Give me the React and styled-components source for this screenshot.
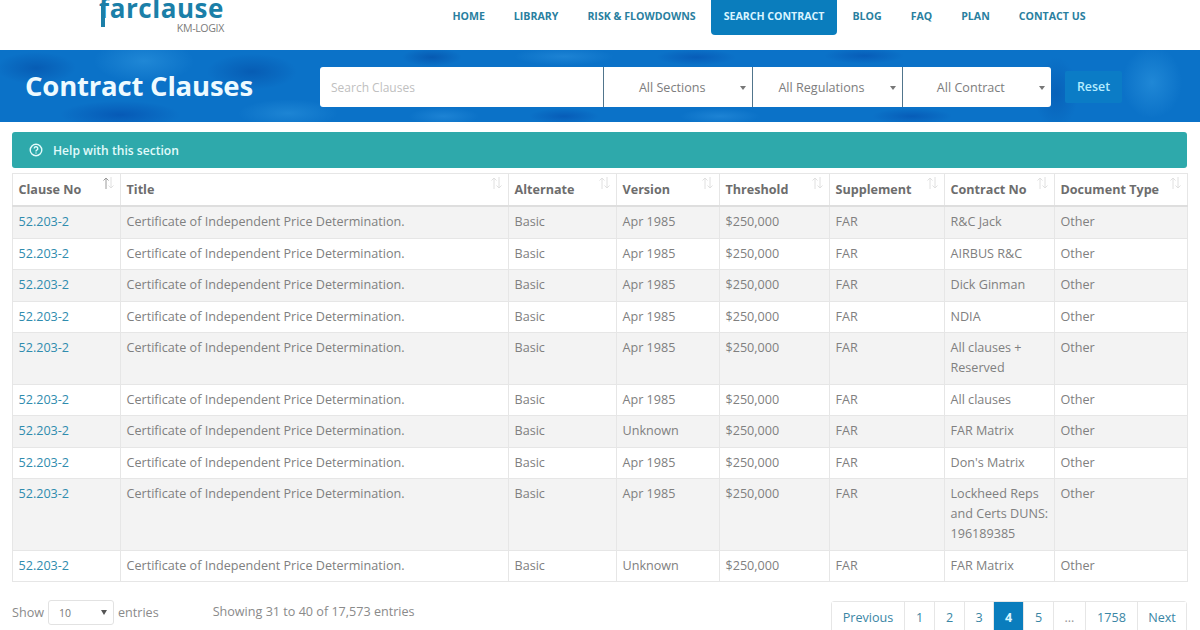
import React from 'react';
import styled, { createGlobalStyle } from 'styled-components';

const GlobalStyle = createGlobalStyle`
  html, body {
    margin: 0;
    padding: 0;
    background: #fff;
    overflow: hidden;
    font-family: "Open Sans", "Liberation Sans", sans-serif;
  }
`;

const Page = styled.div`
  width: 1200px;
  height: 630px;
  overflow: hidden;
`;

const Header = styled.header`
  height: 50px;
  display: flex;
  padding: 0 100px;
  box-sizing: border-box;
`;

const Logo = styled.div`
  display: flex;
  flex-direction: column;
  align-items: flex-end;
  width: 124px;
`;

const LogoName = styled.div`
  font-size: 26px;
  line-height: 26px;
  margin-top: -5px;
  font-weight: 700;
  color: #1b7fa8;
  letter-spacing: 0.55px;
  span {
    position: relative;
  }
  span::after {
    content: '';
    position: absolute;
    left: 2px;
    top: 14px;
    width: 4px;
    height: 23px;
    background: #1b7fa8;
  }
`;

const LogoSub = styled.div`
  font-size: 10.6px;
  line-height: 12px;
  margin-top: 1px;
  letter-spacing: -0.35px;
  color: #7b7b7b;
`;

const Nav = styled.nav`
  margin-left: auto;
  margin-right: 1px;
  display: flex;
  align-items: flex-start;
  gap: 2px;
`;

const NavLink = styled.a`
  font-size: 10.6px;
  font-weight: 700;
  line-height: 32px;
  height: 35px;
  padding: 0 ${props => (props.$active ? '12.5px' : '13.5px')};
  text-transform: uppercase;
  white-space: nowrap;
  color: ${props => (props.$active ? '#d9f4ff' : '#2a7f9f')};
  background: ${props => (props.$active ? '#0a7dbd' : 'transparent')};
  border-radius: 0 0 4px 4px;
`;

const Banner = styled.section`
  height: 72px;
  display: flex;
  align-items: center;
  padding: 0 25px;
  box-sizing: border-box;
  background:
    radial-gradient(ellipse 40px 16px at 3% 25%, rgba(0, 60, 150, 0.4), transparent),
    radial-gradient(ellipse 50px 22px at 12% 15%, rgba(70, 175, 240, 0.35), transparent),
    radial-gradient(ellipse 45px 18px at 21% 30%, rgba(0, 60, 150, 0.4), transparent),
    radial-gradient(ellipse 60px 14px at 10% 90%, rgba(0, 60, 160, 0.45), transparent),
    radial-gradient(ellipse 50px 14px at 24% 88%, rgba(70, 175, 240, 0.3), transparent),
    radial-gradient(ellipse 30px 9px at 36% 10%, rgba(0, 60, 150, 0.45), transparent),
    radial-gradient(ellipse 50px 9px at 47% 9%, rgba(70, 170, 240, 0.3), transparent),
    radial-gradient(ellipse 40px 8px at 58% 10%, rgba(0, 60, 160, 0.4), transparent),
    radial-gradient(ellipse 35px 9px at 37% 92%, rgba(70, 170, 240, 0.3), transparent),
    radial-gradient(ellipse 35px 8px at 47% 92%, rgba(0, 60, 160, 0.4), transparent),
    radial-gradient(ellipse 40px 8px at 60% 92%, rgba(70, 170, 240, 0.3), transparent),
    radial-gradient(ellipse 40px 8px at 72% 8%, rgba(0, 60, 160, 0.4), transparent),
    radial-gradient(ellipse 40px 8px at 76% 92%, rgba(0, 60, 160, 0.4), transparent),
    radial-gradient(ellipse 30px 36px at 96% 45%, rgba(70, 175, 240, 0.35), transparent),
    radial-gradient(ellipse 22px 36px at 88% 60%, rgba(0, 60, 150, 0.3), transparent),
    #0b72c8;
`;

const Title = styled.h1`
  margin: 0 0 1px;
  width: 295px;
  font-size: 27.5px;
  font-weight: 700;
  letter-spacing: -0.2px;
  white-space: nowrap;
  color: #eefaff;
`;

const Filters = styled.div`
  display: flex;
  width: 731px;
  height: 40px;
  margin-top: 1px;
  background: #fff;
  border-radius: 3px;
  overflow: hidden;
`;

const SearchInput = styled.div`
  width: 283px;
  padding-left: 11px;
  box-sizing: border-box;
  font-size: 12px;
  line-height: 41px;
  color: #c0c0c0;
`;

const FilterSelect = styled.div`
  flex: 1;
  position: relative;
  border-left: 1px solid #51758c;
  font-size: 12.6px;
  line-height: 41px;
  text-align: center;
  padding-right: 12px;
  color: #7d7d7d;
  &::after {
    content: '';
    position: absolute;
    right: 6px;
    top: 19px;
    border: 3.5px solid transparent;
    border-top: 4px solid #777;
    border-bottom: 0;
  }
`;

const ResetButton = styled.button`
  margin: 1px 0 0 14px;
  width: 57px;
  height: 32px;
  border: 0;
  padding: 0;
  background: #0b7cc6;
  color: #b5ecff;
  font: 600 12.4px "Open Sans", sans-serif;
  border-radius: 2px;
`;

const Content = styled.main`
  padding: 10px 13px 0 12px;
`;

const HelpBar = styled.div`
  height: 36px;
  display: flex;
  align-items: center;
  gap: 10px;
  padding-left: 17px;
  background: #2ea9ab;
  border-radius: 3px;
  color: #e2fbfb;
  font-size: 12.1px;
  font-weight: 600;
`;

const HelpIcon = styled.svg`
  width: 14px;
  height: 14px;
  fill: none;
  stroke: currentColor;
`;

const Table = styled.table`
  margin-top: 5px;
  width: 1175px;
  table-layout: fixed;
  border-collapse: collapse;
  font-size: 12.6px;
  line-height: 20px;
  color: #808080;
`;

const Th = styled.th`
  border: 1px solid #e6e6e6;
  border-bottom: 2px solid #dedede;
  padding: 0 5.5px;
  height: 31px;
  text-align: left;
  font-size: 12.6px;
  font-weight: 700;
  color: #6d6d6d;
  white-space: nowrap;
`;

const ThInner = styled.div`
  display: flex;
  justify-content: space-between;
`;

const SortIcon = styled.svg`
  width: 13px;
  height: 14px;
  margin-top: -4px;
  fill: none;
  stroke: #e0e0e0;
  flex-shrink: 0;
  .up {
    stroke: ${props => (props.$sorted ? '#9a9a9a' : '#e0e0e0')};
  }
`;

const Row = styled.tr`
  background: ${props => (props.$odd ? '#f3f3f3' : '#fff')};
`;

const Td = styled.td`
  border: 1px solid #e6e6e6;
  padding: 5.25px 5.5px;
  vertical-align: top;
`;

const ClauseLink = styled.a`
  color: #2f8cae;
`;

const Footer = styled.div`
  margin-top: 17px;
  display: flex;
  align-items: flex-start;
  font-size: 12.6px;
  color: #8a8a8a;
`;

const LengthLabel = styled.div`
  display: flex;
  align-items: center;
  gap: 4px;
  height: 26px;
  margin-right: 1px;
`;

const LengthSelect = styled.div`
  width: 66px;
  height: 25px;
  box-sizing: border-box;
  position: relative;
  border: 1px solid #e2e2e2;
  border-radius: 3px;
  padding-left: 10px;
  font-size: 10.5px;
  line-height: 25px;
  color: #777;
  &::after {
    content: '';
    position: absolute;
    right: 6px;
    top: 9px;
    border: 3px solid transparent;
    border-top: 5px solid #555;
    border-bottom: 0;
  }
`;

const Info = styled.div`
  margin: 2px 0 0 53px;
  line-height: 22px;
`;

const Pagination = styled.div`
  margin: 2px 0 0 auto;
  display: flex;
  height: 40px;
  border: 1px solid #e6e6e6;
  border-radius: 3px;
  box-sizing: border-box;
`;

const PageItem = styled.a`
  width: ${props => props.$w}px;
  box-sizing: border-box;
  text-align: center;
  padding-top: 6px;
  line-height: 20px;
  font-size: 12.6px;
  border-left: ${props => (props.$first ? '0' : '1px solid #e6e6e6')};
  color: ${props => (props.$active ? '#d9f6ff' : props.$muted ? '#999' : '#3a86a5')};
  background: ${props => (props.$active ? '#0a7dbd' : '#fff')};
  font-weight: ${props => (props.$active ? 700 : 400)};
`;

const navItems = ['Home', 'Library', 'Risk & Flowdowns', 'Search Contract', 'Blog', 'FAQ', 'Plan', 'Contact Us'];
const filters = ['All Sections', 'All Regulations', 'All Contract'];

const columns = [
  { label: 'Clause No', width: 108, sorted: true },
  { label: 'Title', width: 388 },
  { label: 'Alternate', width: 108 },
  { label: 'Version', width: 103 },
  { label: 'Threshold', width: 110 },
  { label: 'Supplement', width: 115 },
  { label: 'Contract No', width: 110 },
  { label: 'Document Type', width: 133 },
];

const rows = [
  ['Apr 1985', ['R&C Jack']],
  ['Apr 1985', ['AIRBUS R&C']],
  ['Apr 1985', ['Dick Ginman']],
  ['Apr 1985', ['NDIA']],
  ['Apr 1985', ['All clauses +', 'Reserved']],
  ['Apr 1985', ['All clauses']],
  ['Unknown', ['FAR Matrix']],
  ['Apr 1985', ["Don's Matrix"]],
  ['Apr 1985', ['Lockheed Reps', 'and Certs DUNS:', '196189385']],
  ['Unknown', ['FAR Matrix']],
];

const pages = [
  { label: 'Previous', w: 72 },
  { label: '1', w: 30 },
  { label: '2', w: 30 },
  { label: '3', w: 29 },
  { label: '4', w: 30, active: true },
  { label: '5', w: 30 },
  { label: '…', w: 32, muted: true },
  { label: '1758', w: 52 },
  { label: 'Next', w: 49 },
];

function Sort({ sorted }) {
  return (
    <SortIcon $sorted={sorted} viewBox="0 0 13 14">
      <path className="up" d="M4 13V2M1.5 4.5 4 2l2.5 2.5" />
      <path d="M9 1v11M6.5 9.5 9 12l2.5-2.5" />
    </SortIcon>
  );
}

export default function App() {
  return (
    <Page>
      <GlobalStyle />
      <Header>
        <Logo>
          <LogoName><span>f</span>arclause</LogoName>
          <LogoSub>KM-LOGIX</LogoSub>
        </Logo>
        <Nav>
          {navItems.map(item => (
            <NavLink key={item} $active={item === 'Search Contract'}>{item}</NavLink>
          ))}
        </Nav>
      </Header>

      <Banner>
        <Title>Contract Clauses</Title>
        <Filters>
          <SearchInput>Search Clauses</SearchInput>
          {filters.map(f => <FilterSelect key={f}>{f}</FilterSelect>)}
        </Filters>
        <ResetButton>Reset</ResetButton>
      </Banner>

      <Content>
        <HelpBar>
          <HelpIcon viewBox="0 0 14 14" strokeWidth="1.4">
            <circle cx="7" cy="7" r="5.8" />
            <path d="M5.2 5.6a1.8 1.8 0 1 1 2.6 1.6c-.6.3-.8.6-.8 1.2M7 9.6v1" />
          </HelpIcon>
          Help with this section
        </HelpBar>

        <Table>
          <colgroup>
            {columns.map(c => <col key={c.label} style={{ width: c.width }} />)}
          </colgroup>
          <thead>
            <tr>
              {columns.map(c => (
                <Th key={c.label}>
                  <ThInner>
                    {c.label}
                    <Sort sorted={c.sorted} />
                  </ThInner>
                </Th>
              ))}
            </tr>
          </thead>
          <tbody>
            {rows.map(([version, contract], i) => (
              <Row key={i} $odd={i % 2 === 0}>
                <Td><ClauseLink>52.203-2</ClauseLink></Td>
                <Td>Certificate of Independent Price Determination.</Td>
                <Td>Basic</Td>
                <Td>{version}</Td>
                <Td>$250,000</Td>
                <Td>FAR</Td>
                <Td>{contract.map(line => <div key={line}>{line}</div>)}</Td>
                <Td>Other</Td>
              </Row>
            ))}
          </tbody>
        </Table>

        <Footer>
          <LengthLabel>
            Show
            <LengthSelect>10</LengthSelect>
            entries
          </LengthLabel>
          <Info>Showing 31 to 40 of 17,573 entries</Info>
          <Pagination>
            {pages.map((p, i) => (
              <PageItem key={p.label} $w={p.w} $first={i === 0} $active={p.active} $muted={p.muted}>
                {p.label}
              </PageItem>
            ))}
          </Pagination>
        </Footer>
      </Content>
    </Page>
  );
}
